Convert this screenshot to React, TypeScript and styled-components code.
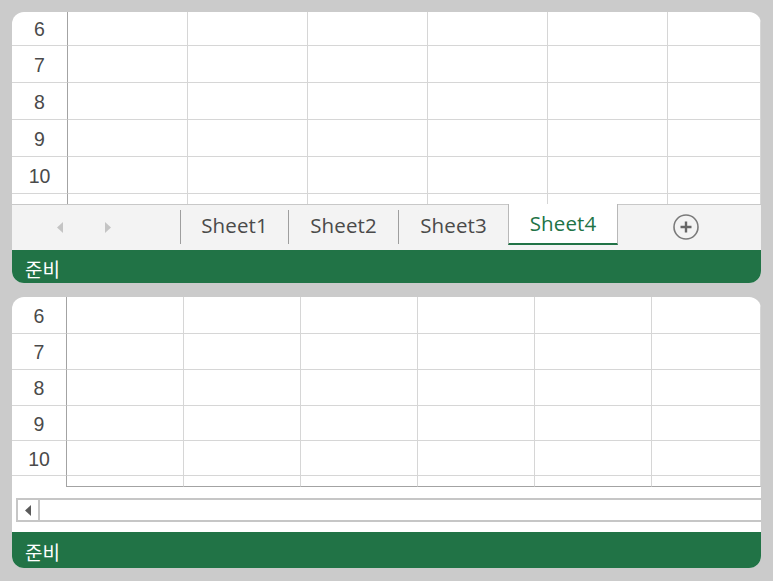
import styled, { createGlobalStyle, css } from "styled-components";

const GREEN = "#217346";
const GRID_LINE = "#d6d6d6";
const HEAD_LINE = "#a3a3a3";

const GlobalStyle = createGlobalStyle`
  html, body {
    margin: 0;
    padding: 0;
    background: #cbcbcb;
  }
  body {
    font-family: "Open Sans", "Liberation Sans", "Noto Sans CJK KR", sans-serif;
  }
  * { box-sizing: border-box; }
`;

const Page = styled.div`
  display: flex;
  flex-direction: column;
  gap: 14px;
  padding: 12px;
  width: 773px;
  height: 581px;
`;

const Panel = styled.section`
  display: flex;
  flex-direction: column;
  height: 271px;
  background: #fff;
  border-radius: 12px;
  overflow: hidden;
`;

const Grid = styled.div<{ $head: number; $col: number; $rows: string }>`
  display: grid;
  grid-template-columns: ${(p) => `${p.$head}px repeat(5, ${p.$col}px) 1fr`};
  grid-template-rows: ${(p) => p.$rows};
  flex: none;
`;

const HeadCell = styled.div<{ $last?: boolean }>`
  display: flex;
  align-items: center;
  justify-content: center;
  border-right: 1px solid ${HEAD_LINE};
  border-bottom: ${(p) => (p.$last ? "none" : `1px solid ${GRID_LINE}`)};
  color: #4a4a4a;
  font-family: "Liberation Sans", "Open Sans", sans-serif;
  font-size: 19.5px;
  padding-top: 2px;
`;

const Cell = styled.div<{ $last?: boolean; $closed?: boolean }>`
  border-right: 1px solid ${GRID_LINE};
  ${(p) =>
    p.$closed
      ? css`border-bottom: 1px solid ${HEAD_LINE};`
      : p.$last
      ? css`border-bottom: none;`
      : css`border-bottom: 1px solid ${GRID_LINE};`}
`;

const TabBar = styled.div`
  display: flex;
  align-items: flex-start;
  height: 46px;
  background: #f3f3f3;
  border-top: 1px solid #c8c8c8;
`;

const Nav = styled.div`
  display: flex;
  align-items: center;
  gap: 42px;
  width: 168px;
  height: 44px;
  padding-left: 45px;
`;

const Tab = styled.div<{ $w: number; $active?: boolean }>`
  display: flex;
  align-items: center;
  justify-content: center;
  width: ${(p) => p.$w}px;
  font-size: 20.5px;
  letter-spacing: 0.1px;
  ${(p) =>
    p.$active
      ? css`
          margin-top: -1px;
          height: 41px;
          padding-bottom: 1px;
          background: #fff;
          color: ${GREEN};
          border-left: 1px solid #b8b8b8;
          border-right: 1px solid #b8b8b8;
          border-bottom: 2px solid ${GREEN};
        `
      : css`
          margin-top: 5px;
          height: 34px;
          padding-bottom: 4px;
          color: #4a4a4a;
          border-left: 1px solid #9e9e9e;
        `}
`;

const AddButton = styled.div`
  display: flex;
  align-items: center;
  justify-content: center;
  width: 40px;
  height: 44px;
  margin-left: 48px;
`;

const Status = styled.div<{ $h: number }>`
  display: flex;
  align-items: center;
  height: ${(p) => p.$h}px;
  padding: 3px 0 0 13px;
  background: ${GREEN};
  color: #fff;
  font-family: "Noto Sans CJK KR", "Open Sans", sans-serif;
  font-size: 19px;
  margin-top: auto;
`;

const ScrollWrap = styled.div`
  padding: 11px 0 10px 4px;
`;

const ScrollBar = styled.div`
  display: flex;
  height: 24px;
  border: 2px solid #c6c6c6;
  border-right: none;
`;

const ScrollButton = styled.div`
  display: flex;
  align-items: center;
  justify-content: center;
  width: 22px;
  border-right: 2px solid #c6c6c6;
`;

const Arrow = ({ dir, color }: { dir: "left" | "right"; color: string }) => (
  <svg width="6" height="11" viewBox="0 0 6 11">
    <polygon points={dir === "left" ? "6,0 6,11 0,5.5" : "0,0 0,11 6,5.5"} fill={color} />
  </svg>
);

const PlusIcon = () => (
  <svg width="28" height="28" viewBox="0 0 28 28">
    <circle cx="14" cy="14" r="12" fill="none" stroke="#7a7a7a" strokeWidth="1.6" />
    <path d="M14 8.5v11M8.5 14h11" stroke="#666" strokeWidth="2.4" />
  </svg>
);

function Sheet({
  head,
  col,
  rows,
  closed,
}: {
  head: number;
  col: number;
  rows: number[];
  closed?: boolean;
}) {
  const labels = ["6", "7", "8", "9", "10", ""];
  return (
    <Grid $head={head} $col={col} $rows={rows.map((r) => `${r}px`).join(" ")}>
      {labels.map((label, r) => {
        const last = r === labels.length - 1;
        return [
          <HeadCell key={`h${r}`} $last={last}>
            {label}
          </HeadCell>,
          ...Array.from({ length: 6 }, (_, c) => (
            <Cell key={`${r}-${c}`} $last={last} $closed={last && closed} />
          )),
        ];
      })}
    </Grid>
  );
}

export default function App() {
  return (
    <>
      <GlobalStyle />
      <Page>
        <Panel>
          <Sheet head={56} col={120} rows={[34, 37, 37, 37, 37, 10]} />
          <TabBar>
            <Nav>
              <Arrow dir="left" color="#c4c4c4" />
              <Arrow dir="right" color="#c4c4c4" />
            </Nav>
            <Tab $w={108}>Sheet1</Tab>
            <Tab $w={110}>Sheet2</Tab>
            <Tab $w={110}>Sheet3</Tab>
            <Tab $w={110} $active>
              Sheet4
            </Tab>
            <AddButton>
              <PlusIcon />
            </AddButton>
          </TabBar>
          <Status $h={33}>준비</Status>
        </Panel>
        <Panel>
          <Sheet head={55} col={117} rows={[37, 36, 36, 35, 35, 11]} closed />
          <ScrollWrap>
            <ScrollBar>
              <ScrollButton>
                <Arrow dir="left" color="#5a5a5a" />
              </ScrollButton>
            </ScrollBar>
          </ScrollWrap>
          <Status $h={36}>준비</Status>
        </Panel>
      </Page>
    </>
  );
}
